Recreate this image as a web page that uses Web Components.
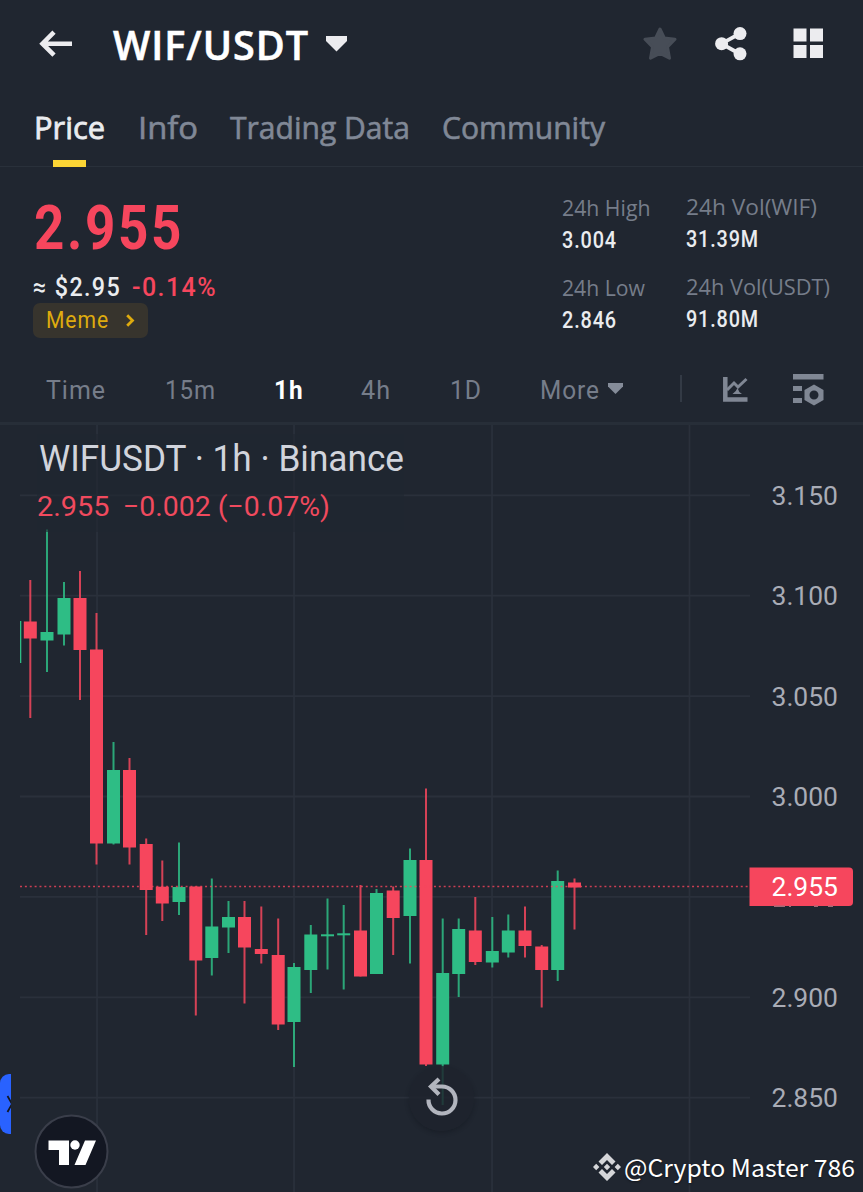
<!DOCTYPE html>
<html lang="en">
<head>
<meta charset="utf-8">
<title>WIF/USDT</title>
<style>
  body {
    margin: 0;
    background: #202630;
    color: #eaecef;
    font-family: Roboto, "Liberation Sans", sans-serif;
  }
</style>
</head>
<body>
<trade-page></trade-page>

<script>
const define = (name, html, setup) => {
    const template = document.createElement('template');
    template.innerHTML = html;

    window.customElements.define(name, class extends HTMLElement {
        constructor() {
            super();
            this.attachShadow({ mode: 'open' }).appendChild(template.content.cloneNode(true));
        }

        connectedCallback() {
            if (setup) setup(this, this.shadowRoot);
        }
    });
};

// one line of text, stretched or squeezed to the width in its "w" attribute
define('fit-text', `<style>
  :host {
    display: block;
    flex: none;
    white-space: pre;
  }

  span {
    display: inline-block;
    transform-origin: 0 50%;
  }
</style><span><slot></slot></span>`, (host, shadow) => {
    const span = shadow.querySelector('span');
    const width = Number(host.getAttribute('w'));
    host.style.width = width + 'px';
    span.style.transform = `scaleX(${width / span.getBoundingClientRect().width})`;
});

define('pair-header', `<style>
  :host {
    display: flex;
    align-items: center;
    height: 87px;
    box-sizing: border-box;
    padding: 0 39px;
    color: #ececef;
  }

  svg {
    display: block;
    flex: none;
  }

  fit-text {
    margin: 2px 17px 0 40px;
    font: 600 40px/50px "Open Sans", sans-serif;
    letter-spacing: 1px;
    color: #fff;
    -webkit-text-stroke: 0.6px #fff;
  }

  .actions {
    display: flex;
    align-items: center;
    margin-left: auto;
  }
</style>
<svg width="34" height="28" viewBox="0 0 34 28" fill="none" stroke="currentColor" stroke-width="4.600">
  <path d="M33 13.700H4M15 2.200L3.500 13.700L15 25.200"/>
</svg>
<fit-text w="196"><slot></slot></fit-text>
<svg width="21" height="16" viewBox="0 0 21 16" fill="currentColor"><path d="M0 0H21V5L10.500 15.500L0 5Z"/></svg>
<div class="actions">
  <svg width="34" height="34" viewBox="0 0 34 34" fill="#474d57" stroke="#474d57" stroke-width="3" stroke-linejoin="round">
    <path d="M17 2L21.300 11L32 12.300L24.500 20L26.500 31.200L17 26.500L7.500 31.200L9.500 20L2 12.300L12.700 11Z"/>
  </svg>
  <svg style="margin-left:38px" width="32" height="34" viewBox="0 0 32 34" fill="currentColor">
    <path d="M25 6.500L6.500 16.700L25 27" fill="none" stroke="currentColor" stroke-width="3.800"/>
    <circle cx="25" cy="6.600" r="6.500"/><circle cx="6.600" cy="16.700" r="6.500"/><circle cx="25" cy="26.800" r="6.500"/>
  </svg>
  <svg style="margin-left:46px" width="31" height="31" viewBox="0 0 31 31" fill="currentColor">
    <path d="M0.500 0.500H13.500V13.500H0.500ZM17 0.500H30V13.500H17ZM0.500 17H13.500V30H0.500ZM17 17H30V30H17Z"/>
  </svg>
</div>`);

define('page-tabs', `<style>
  :host {
    display: flex;
    align-items: center;
    height: 80px;
    box-sizing: border-box;
    padding-left: 34px;
    border-bottom: 1px solid #29303a;
    font: 400 30.500px/40px "Open Sans", sans-serif;
    color: #808896;
    -webkit-text-stroke: 0.6px currentColor;
  }
</style><slot></slot>`);

define('page-tab', `<style>
  :host {
    display: block;
    position: relative;
    height: 40px;
  }

  :host([active]) {
    color: #eaecef;
    -webkit-text-stroke: 0.8px #eaecef;
  }

  :host([active])::after {
    content: "";
    position: absolute;
    left: 19px;
    bottom: -20px;
    width: 33px;
    height: 7px;
    background: #fcd535;
  }
</style><slot></slot>`);

define('price-ticker', `<style>
  :host {
    display: flex;
    justify-content: space-between;
    height: 188px;
    box-sizing: border-box;
    padding: 34px 31px 0 33px;
  }

  .price {
    margin: 1px 0 0 1px;
    font: 700 61px/52px Roboto, sans-serif;
    letter-spacing: 3px;
    color: #f6465d;
  }

  .change {
    display: flex;
    align-items: center;
    margin-top: 16px;
    font: 500 26px/34px Roboto, sans-serif;
    letter-spacing: 1.500px;
  }

  .change fit-text + fit-text {
    margin-left: 11px;
    color: #f6465d;
  }

  .tag {
    display: flex;
    align-items: center;
    width: 115px;
    height: 35px;
    box-sizing: border-box;
    margin-top: -1px;
    padding-left: 13px;
    border-radius: 7px;
    background: #37342d;
    color: #dfab0e;
    font: 400 23px/34px Roboto, sans-serif;
    letter-spacing: 1px;
  }

  .tag svg {
    margin-left: 17px;
  }

  .stats {
    display: grid;
    grid-template-columns: 124px 146px;
    align-content: start;
  }
</style>
<div>
  <fit-text class="price" w="150">2.955</fit-text>
  <div class="change"><fit-text w="88">≈ $2.95</fit-text><fit-text w="85">-0.14%</fit-text></div>
  <div class="tag"><fit-text w="63">Meme</fit-text>
    <svg width="9" height="13" viewBox="0 0 9 13" fill="none" stroke="currentColor" stroke-width="2.800"><path d="M1.200 1.200L6.500 6.500L1.200 11.800"/></svg>
  </div>
</div>
<div class="stats"><slot></slot></div>`);

define('day-stat', `<style>
  :host {
    display: block;
    height: 80px;
    margin-top: -9px;
    margin-bottom: 9px;
  }

  :host([raised]) {
    margin-top: -10px;
    margin-bottom: 10px;
  }

  .label {
    font: 400 22px/31px "Open Sans", sans-serif;
    color: #767d8a;
  }

  .value {
    margin-top: 2px;
    font: 500 23px/31px Roboto, sans-serif;
    letter-spacing: 1px;
    color: #eaecef;
  }
</style><div class="label"><slot name="label"></slot></div><div class="value"><slot></slot></div>`);

define('interval-bar', `<style>
  :host {
    display: flex;
    align-items: center;
    height: 70px;
    box-sizing: border-box;
    padding: 3px 0 0 46px;
    border-bottom: 3px solid #272e38;
    font: 400 25.500px/36px Roboto, sans-serif;
    letter-spacing: 1px;
    color: #767d8a;
  }

  ::slotted([active]) {
    font-weight: 700;
    color: #fff;
  }

  svg {
    display: block;
    flex: none;
  }

  .divider {
    width: 2px;
    height: 27px;
    margin: -3px 41px 0 57px;
    background: #333a45;
  }
</style>
<slot></slot>
<svg style="margin:-4px 0 0 8px" width="15" height="11" viewBox="0 0 15 11" fill="#858c99"><path d="M0 0H15V3.500L7.500 11L0 3.500Z"/></svg>
<div class="divider"></div>
<svg style="margin-top:-2px" width="25" height="25" viewBox="0 0 25 25" fill="none" stroke="#808794">
  <path d="M2.300 0V22.500H24.500" stroke-width="4.500"/>
  <path d="M4 13L11 6L15 10L23.500 2" stroke-width="3"/>
  <path d="M9.500 17Q13.500 14 14.500 11Q15.500 15 19 17Z" fill="#808794" stroke="none"/>
</svg>
<svg style="margin:0 0 0 45px" width="31" height="32" viewBox="0 0 31 32" fill="#808794">
  <path d="M0 0H30.500V5.500H0ZM0 12H9V17H0ZM0 24H9V29H0Z"/>
  <path fill-rule="evenodd" d="M21 10.500L30.500 16V26L21 31.500L11.500 26V16ZM21 16.500A4.500 4.500 0 1 0 21 25.500A4.500 4.500 0 1 0 21 16.500Z"/>
</svg>`);

// x, high, body top, body bottom, low, direction (y in page pixels)
const candles = [
    [30.3, 580, 621.5, 638.5, 718, 'down'],
    [47, 529.5, 632, 640.5, 672, 'up'],
    [64, 582, 598, 634.5, 645.5, 'up'],
    [80, 571, 598, 650, 700, 'down'],
    [96.5, 613, 649.5, 843.5, 864.5, 'down'],
    [113.5, 742, 770, 843.5, 844.5, 'up'],
    [129.5, 758, 770, 847.5, 864.5, 'down'],
    [146.2, 838.5, 844, 890, 935, 'down'],
    [162.3, 860.5, 886.7, 903.5, 921, 'down'],
    [179, 842.5, 887, 902, 915, 'up'],
    [195.8, 886.5, 886.5, 960.5, 1015.5, 'down'],
    [211.8, 878.5, 926.5, 958, 975.5, 'up'],
    [228.5, 901, 917, 927.5, 953, 'up'],
    [244.5, 901, 917, 947.5, 1003.5, 'down'],
    [261.3, 906.5, 949, 954, 963.5, 'down'],
    [278.2, 918.5, 955, 1024.5, 1030, 'down'],
    [294, 963, 967, 1022, 1067, 'up'],
    [310.8, 925, 934.5, 970, 993, 'up'],
    [327.5, 898.5, 934.3, 936.3, 969.5, 'up'],
    [343.7, 905, 933.3, 935.3, 989.5, 'up'],
    [360.5, 885, 930.5, 976.5, 976.5, 'down'],
    [376.5, 889, 893, 974, 974, 'up'],
    [393.2, 886.5, 890.5, 918, 955, 'down'],
    [410, 848.5, 860, 916, 963.5, 'up'],
    [426, 788.5, 860, 1064.5, 1066, 'down'],
    [442.7, 918.5, 973, 1064.5, 1105, 'up'],
    [458.7, 918.5, 929, 974, 997, 'up'],
    [475.3, 897, 930.5, 962, 965, 'down'],
    [492.3, 917, 951, 962.5, 967.5, 'up'],
    [508.3, 914.5, 930.5, 952.5, 957.5, 'up'],
    [525, 906.5, 930.5, 946, 957.5, 'down'],
    [541.7, 945, 946.5, 970, 1007.5, 'down'],
    [557.7, 870.5, 881, 970, 981, 'up'],
    [574.5, 878.5, 882.5, 887.5, 929.5, 'down']
];

const prices = ['3.150', '3.100', '3.050', '3.000', '2.950', '2.900', '2.850'];

define('price-chart', `<style>
  :host {
    display: block;
    position: relative;
    height: 767px;
    overflow: hidden;
  }

  svg {
    display: block;
  }

  text {
    font: 400 26px Roboto, sans-serif;
    fill: #a9acb6;
  }

  .grid {
    stroke: #2a303b;
    stroke-width: 1.800;
  }

  .up {
    fill: #2ebd85;
  }

  .down {
    fill: #f6465d;
  }

  .wick {
    opacity: 0.85;
  }

  .legend {
    position: absolute;
    left: 37px;
    top: 9px;
    padding-bottom: 2px;
    background: rgba(32, 38, 48, 0.6);
  }

  .symbol {
    margin-left: 2px;
    font-size: 36px;
    line-height: 50px;
    color: #d1d4dc;
  }

  .values {
    display: flex;
    gap: 13px;
    font-size: 27.500px;
    line-height: 46px;
    color: #f04a5e;
  }

  .handle {
    position: absolute;
    left: 0;
    top: 649px;
    width: 11px;
    height: 60px;
    border-radius: 9px 0 0 9px;
    background: #2962ff;
    overflow: hidden;
  }

  .reset {
    position: absolute;
    left: 409px;
    top: 641px;
    width: 65px;
    height: 65px;
    border-radius: 50%;
    background: rgba(31, 35, 45, 0.82);
    box-shadow: 0 2px 4px rgba(16, 19, 27, 0.4);
  }

  .brand {
    position: absolute;
    left: 34px;
    top: 689px;
  }

  .credit {
    position: absolute;
    right: 8px;
    bottom: 6px;
    display: flex;
    align-items: center;
    gap: 3px;
    color: #fff;
    font: 400 24px/38px "Noto Sans CJK SC", sans-serif;
    text-shadow: 0 1px 2px rgba(0, 0, 0, 0.5);
  }
</style>
<svg class="plot" width="863" height="767" viewBox="0 425 863 767"></svg>
<div class="legend">
  <fit-text class="symbol" w="365">WIFUSDT · 1h · Binance</fit-text>
  <div class="values"><fit-text w="72.500">2.955</fit-text><fit-text w="207">−0.002 (−0.07%)</fit-text></div>
</div>
<div class="handle">
  <svg width="11" height="60" viewBox="0 0 11 60" fill="none" stroke="#131722" stroke-width="1.800"><path d="M7.500 22L12 30L7.500 38"/></svg>
</div>
<div class="reset">
  <svg width="65" height="65" viewBox="0 0 65 65" fill="none" stroke="#b2b5be" stroke-width="4.200">
    <path d="M19.500 33.500A13.500 13.500 0 1 0 33 20.500H22"/>
    <path d="M30 13L22 20.500L30 28.500"/>
  </svg>
</div>
<svg class="brand" width="76" height="76" viewBox="0 0 76 76" fill="#fff">
  <circle cx="37.500" cy="37.500" r="36" fill="#131722" stroke="#3a3e4a" stroke-width="2"/>
  <path d="M14.500 26.500H35V51H25V36H14.500ZM51 26.500H62L51.500 51H40.500Z"/><circle cx="41" cy="31" r="4.700"/>
</svg>
<div class="credit">
  <svg width="28" height="28" viewBox="0 0 28 28" fill="#d5d6d9">
    <path d="M14 0L22.500 8.500L19 12L14 7L9 12L5.500 8.500ZM14 28L22.500 19.500L19 16L14 21L9 16L5.500 19.500ZM3.200 10.800L6.400 14L3.200 17.200L0 14ZM24.800 10.800L28 14L24.800 17.200L21.600 14ZM14 10.800L17.200 14L14 17.200L10.800 14Z"/>
  </svg>
  <fit-text w="231">@Crypto Master 786</fit-text>
</div>`, (host, shadow) => {
    let out = '';
    for (const x of [97, 294, 492, 689.5]) {
        out += `<path class="grid" d="M${x} 425V1192"/>`;
    }
    prices.forEach((price, i) => {
        const y = 495.3 + i * 100.4;
        out += `<path class="grid" d="M20 ${y}H750"/>`;
        // the label at 2.950 sits under the last price badge
        if (price !== '2.950') {
            out += `<text x="771.500" y="${y + 9.5}" textLength="66.500" lengthAdjust="spacingAndGlyphs">${price}</text>`;
        }
    });
    out += '<rect class="up" x="20" y="621" width="1.300" height="42"/>';
    for (const [x, high, top, bottom, low, dir] of candles) {
        out += `<rect class="${dir} wick" x="${x - 1}" y="${high}" width="2" height="${low - high}"/>`;
        out += `<rect class="${dir}" x="${x - 6.5}" y="${top}" width="13" height="${bottom - top}"/>`;
    }
    out += '<path d="M20 886.500H750" stroke="#f6465d" stroke-width="1.600" stroke-dasharray="2 2.870" opacity="0.800"/>';
    out += '<path class="down" d="M749.500 867.500H849Q853 867.500 853 871.500V902Q853 906 849 906H749.500Z"/>';
    out += '<path d="M774 906.300H785M789 906.300H791M814 906.300H818M828 906.300H833" stroke="#a56a76" stroke-width="1.500"/>';
    out += '<text x="771.500" y="896" textLength="66.500" lengthAdjust="spacingAndGlyphs" style="fill:#fff">2.955</text>';
    shadow.querySelector('.plot').innerHTML = out;
});

define('trade-page', `<style>
  :host {
    display: block;
    width: 863px;
    height: 1192px;
    overflow: hidden;
  }

  .i1 { margin-left: 59px; }
  .i2 { margin-left: 58px; }
  .i3 { margin-left: 57px; }
  .i4 { margin-left: 59px; }
  .i5 { margin-left: 58px; }
</style>
<pair-header>WIF/USDT</pair-header>
<page-tabs>
  <page-tab active><fit-text w="71">Price</fit-text></page-tab>
  <page-tab style="margin-left:33px"><fit-text w="60">Info</fit-text></page-tab>
  <page-tab style="margin-left:32px"><fit-text w="180">Trading Data</fit-text></page-tab>
  <page-tab style="margin-left:32px"><fit-text w="163">Community</fit-text></page-tab>
</page-tabs>
<price-ticker>
  <day-stat><fit-text slot="label" w="88.500">24h High</fit-text><fit-text w="55">3.004</fit-text></day-stat>
  <day-stat raised><fit-text slot="label" w="131">24h Vol(WIF)</fit-text><fit-text w="73">31.39M</fit-text></day-stat>
  <day-stat><fit-text slot="label" w="83">24h Low</fit-text><fit-text w="55">2.846</fit-text></day-stat>
  <day-stat raised><fit-text slot="label" w="144">24h Vol(USDT)</fit-text><fit-text w="73">91.80M</fit-text></day-stat>
</price-ticker>
<interval-bar>
  <fit-text w="60">Time</fit-text>
  <fit-text class="i1" w="51">15m</fit-text>
  <fit-text class="i2" w="29.500" active>1h</fit-text>
  <fit-text class="i3" w="30">4h</fit-text>
  <fit-text class="i4" w="32">1D</fit-text>
  <fit-text class="i5" w="60">More</fit-text>
</interval-bar>
<price-chart></price-chart>`);
</script>
</body>
</html>
